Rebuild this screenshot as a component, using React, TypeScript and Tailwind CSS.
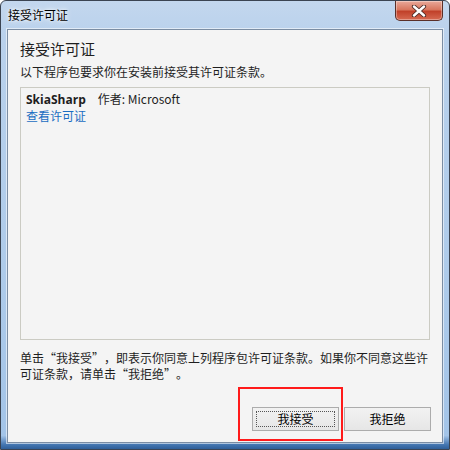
const cjk = "font-['Noto_Sans_CJK_SC','Noto_Sans',sans-serif]";

function CloseButton() {
  return (
    <div className="absolute right-[6px] top-0 flex h-[20px] w-[48px] items-center justify-center rounded-b-[5px] border border-t-0 border-[#5a2f28] bg-[linear-gradient(to_bottom,#e9a99a_0%,#d8775f_45%,#c1412a_55%,#d66a52_100%)] shadow-[inset_0_0_0_1px_rgba(255,255,255,0.35)]">
      <svg width="16" height="12" viewBox="0 0 16 12">
        <path
          d="M3 1.5 L13 10.5 M13 1.5 L3 10.5"
          stroke="#4a2a26"
          strokeWidth="4.2"
          strokeLinecap="round"
        />
        <path
          d="M3 1.5 L13 10.5 M13 1.5 L3 10.5"
          stroke="#ffffff"
          strokeWidth="2.4"
          strokeLinecap="round"
        />
      </svg>
    </div>
  );
}

// full-width curly quotes like the Windows dialog
function Open() {
  return <span className="inline-block w-[12px] text-right">“</span>;
}
function Close() {
  return <span className="inline-block w-[12px] text-left">”</span>;
}

export default function App() {
  return (
    <div
      lang="zh-CN"
      className={`relative flex h-[450px] w-[450px] flex-col rounded-t-[6px] border border-[#3b4452] bg-[linear-gradient(to_bottom,#c3d7ee_0%,#b9d1ec_8%,#aecbea_60%,#a3c4e8_97%,#4577b2_99%,#2f5f98_100%)] px-[6px] pb-[6px] ${cjk}`}
    >
      {/* Title bar */}
      <div className="flex h-[28px] shrink-0 items-center pl-[1px]">
        <span className="text-[12px] leading-none text-black [text-shadow:0_0_6px_#fff,0_0_3px_#fff]">
          接受许可证
        </span>
      </div>
      <CloseButton />

      {/* Dialog body */}
      <div className="flex flex-1 flex-col border border-[#7b8da3] bg-[#f4f4f4] px-[12px] pb-[11px] pt-[9px] shadow-[0_0_0_1px_rgba(255,255,255,0.55)]">
        <div className="text-[15px] leading-[20px] text-[#1e1e1e]">接受许可证</div>
        <div className="mt-[5px] text-[12px] leading-[16px] text-[#1e1e1e]">
          以下程序包要求你在安装前接受其许可证条款。
        </div>

        <div className="mt-[7px] flex-1 border border-[#cbcbc3] bg-[#f4f4f4] pl-[5px] pt-[3px]">
          <div className="text-[12px] leading-[16px] text-[#1e1e1e]">
            <span className="font-['Open_Sans','Noto_Sans',sans-serif] font-bold">SkiaSharp</span>
            <span className="ml-[12px]">作者: Microsoft</span>
          </div>
          <div className="text-[12px] leading-[16px] text-[#1a6dc2]">查看许可证</div>
        </div>

        <div className="mt-[10px] text-[12px] leading-[16px] text-[#1e1e1e]">
          <div className="whitespace-nowrap">
            单击<Open />我接受<Close />，即表示你同意上列程序包许可证条款。如果你不同意这些许
          </div>
          <div>
            可证条款，请单击<Open />我拒绝<Close />。
          </div>
        </div>

        <div className="mt-[25px] mr-[-1px] flex justify-end gap-[5px]">
          <button className="relative flex h-[24px] w-[87px] items-center justify-center border border-[#acacac] bg-[linear-gradient(to_bottom,#f2f2f2,#e6e6e6)] text-[12px] text-black">
            <span className="absolute inset-[3px] border border-dotted border-[#555]" />
            我接受
          </button>
          <button className="flex h-[24px] w-[87px] items-center justify-center border border-[#acacac] bg-[linear-gradient(to_bottom,#f2f2f2,#e6e6e6)] text-[12px] text-black">
            我拒绝
          </button>
        </div>
      </div>

      {/* red annotation box */}
      <div className="pointer-events-none absolute left-[237px] top-[386px] h-[54px] w-[105px] border-2 border-[#ff1a1a]" />
    </div>
  );
}
